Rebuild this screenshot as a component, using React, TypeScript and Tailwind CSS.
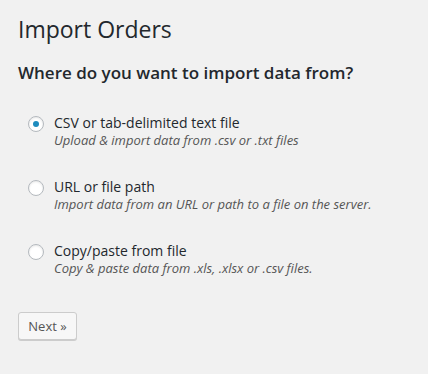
import React from "react";

const options = [
  { label: "CSV or tab-delimited text file", desc: "Upload & import data from .csv or .txt files", checked: true },
  { label: "URL or file path", desc: "Import data from an URL or path to a file on the server.", checked: false },
  { label: "Copy/paste from file", desc: "Copy & paste data from .xls, .xlsx or .csv files.", checked: false },
];

export default function App() {
  return (
    <div
      className="w-[428px] h-[374px] bg-[#f1f1f1] text-[#23282d] pl-[18px] pt-[14px] flex flex-col"
      style={{ fontFamily: '"Open Sans", "Noto Sans", sans-serif' }}
    >
      <h1 className="text-[23px] leading-[30px] font-normal">Import Orders</h1>
      <h2 className="mt-[17px] text-[17px] leading-[24px] font-semibold">Where do you want to import data from?</h2>
      <div className="mt-[29px] flex flex-col gap-[30px] pl-[10px]">
        {options.map((o) => (
          <div key={o.label} className="flex items-start">
            <span className="mt-[2px] w-[16px] h-[16px] rounded-full bg-white border border-[#b4b9be] shadow-[inset_0_1px_2px_rgba(0,0,0,0.1)] flex items-center justify-center shrink-0">
              {o.checked && <span className="w-[6px] h-[6px] rounded-full bg-[#1e8cbe]" />}
            </span>
            <div className="ml-[10px] flex flex-col">
              <span className="text-[14px] leading-[18px] text-[#23282d]">{o.label}</span>
              <span className="text-[13px] leading-[16px] italic text-[#555]">{o.desc}</span>
            </div>
          </div>
        ))}
      </div>
      <div className="mt-[36px]">
        <button className="h-[28px] w-[59px] rounded-[3px] border border-[#cccccc] bg-[#f7f7f7] shadow-[0_1px_0_#cccccc] text-[13px] text-[#555] leading-[26px]">
          Next »
        </button>
      </div>
    </div>
  );
}
